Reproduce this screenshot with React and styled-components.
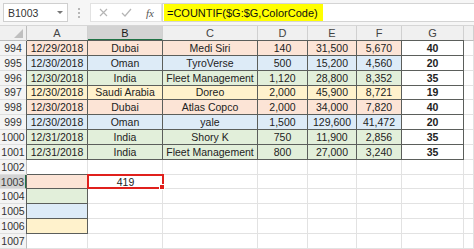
import React from 'react'
import styled, { createGlobalStyle } from 'styled-components'

const GlobalStyle = createGlobalStyle`
    html, body {
        margin: 0;
        padding: 0;
        background: #fff;
        overflow: hidden;
    }
    body {
        font-family: "Liberation Sans", Arial, sans-serif;
    }
`

const DARK = '#5b5e5b'
const LIGHT = '#e2e2e2'

const COLORS = {
    peach: '#fce4d6',
    blue: '#ddebf7',
    green: '#e2efda',
    yellow: '#fff2cc',
}

const ROWS = [
    ['994', '12/29/2018', 'Dubai', 'Medi Siri', '140', '31,500', '5,670', '40', 'peach'],
    ['995', '12/30/2018', 'Oman', 'TyroVerse', '500', '15,200', '4,560', '20', 'blue'],
    ['996', '12/30/2018', 'India', 'Fleet Management', '1,120', '28,800', '8,352', '35', 'green'],
    ['997', '12/30/2018', 'Saudi Arabia', 'Doreo', '2,000', '45,900', '8,721', '19', 'yellow'],
    ['998', '12/30/2018', 'Dubai', 'Atlas Copco', '2,000', '34,000', '7,820', '40', 'peach'],
    ['999', '12/30/2018', 'Oman', 'yale', '1,500', '129,600', '41,472', '20', 'blue'],
    ['1000', '12/31/2018', 'India', 'Shory K', '750', '11,900', '2,856', '35', 'green'],
    ['1001', '12/31/2018', 'India', 'Fleet Management', '800', '27,000', '3,240', '35', 'green'],
]

const LEGEND = [
    ['1002', null],
    ['1003', 'peach'],
    ['1004', 'green'],
    ['1005', 'blue'],
    ['1006', 'yellow'],
    ['1007', null],
]

const COLUMNS = ['A', 'B', 'C', 'D', 'E', 'F', 'G']

const Sheet = styled.div`
    width: 474px;
    height: 249px;
    overflow: hidden;
    display: flex;
    flex-direction: column;
`

const FormulaBar = styled.div`
    height: 26px;
    flex: none;
    display: flex;
    align-items: flex-start;
    padding: 3px 0 0 3px;
    box-sizing: border-box;
    background: #f6f6f6;
    border-bottom: 1px solid #d6d6d6;
`

const NameBox = styled.div`
    width: 65px;
    height: 19px;
    box-sizing: border-box;
    background: #fff;
    border: 1px solid #cfcfcf;
    display: flex;
    align-items: center;
    justify-content: space-between;
    padding: 0 4px 0 4px;
    font-size: 10.5px;
    color: #333;
`

const Caret = styled.span`
    width: 0;
    height: 0;
    border-left: 3px solid transparent;
    border-right: 3px solid transparent;
    border-top: 3px solid #777;
`

const Dots = styled.div`
    width: 22px;
    height: 19px;
    display: flex;
    flex-direction: column;
    align-items: center;
    justify-content: center;
    gap: 2px;

    span {
        width: 2px;
        height: 2px;
        background: #b8b8b8;
    }
`

const IconGroup = styled.div`
    height: 19px;
    width: 72px;
    box-sizing: border-box;
    background: #fff;
    border: 1px solid #e2e2e2;
    display: flex;
    align-items: center;
    padding-left: 8px;
    gap: 13px;
`

const Fx = styled.span`
    font-family: "Liberation Serif", serif;
    font-style: italic;
    font-size: 11px;
    color: #555;
    margin-left: 1px;
`

const FormulaInput = styled.div`
    flex: 1;
    height: 19px;
    box-sizing: border-box;
    background: #fff;
    border: 1px solid #d4d4d4;
    border-right: none;
    display: flex;
    align-items: center;
    padding-left: 1px;
`

const Highlight = styled.span`
    background: #ffff00;
    height: 17px;
    display: flex;
    align-items: center;
    padding: 0 5px 0 3px;
    font-size: 11px;
    color: #111;
`

const Grid = styled.div`
    flex: 1;
    display: grid;
    grid-template-columns: 27px 61px 75px 95px 50px 49px 45px 62px 1fr;
    grid-template-rows: 15px;
    grid-auto-rows: 14.85px;
    font-size: 10.5px;
    color: #222;
`

const ColHeader = styled.div`
    background: ${p => (p.$active ? '#d3d3d3' : '#f0f0f0')};
    border-right: 1px solid #d0d0d0;
    border-bottom: ${p => (p.$active ? '2px solid #217346' : '1px solid #bdbdbd')};
    box-sizing: border-box;
    display: flex;
    align-items: center;
    justify-content: center;
    color: ${p => (p.$active ? '#1b1b1b' : '#444')};
    font-size: 11px;
`

const Corner = styled.div`
    background: #f0f0f0;
    border-right: 1px solid #bdbdbd;
    border-bottom: 1px solid #bdbdbd;
    box-sizing: border-box;
    display: flex;
    align-items: flex-end;
    justify-content: flex-end;
    padding: 0 3px 2px 0;

    span {
        width: 0;
        height: 0;
        border-left: 9px solid transparent;
        border-bottom: 9px solid #bfbfbf;
    }
`

const RowHeader = styled.div`
    background: ${p => (p.$active ? '#d3d3d3' : '#f4f4f4')};
    border-right: ${p => (p.$active ? '2px solid #217346' : '1px solid #bdbdbd')};
    border-bottom: 1px solid #dedede;
    box-sizing: border-box;
    display: flex;
    align-items: center;
    justify-content: center;
    color: ${p => (p.$active ? '#3a3a3a' : '#333')};
    font-size: 10.5px;
`

const Cell = styled.div`
    background: ${p => p.$bg || '#fff'};
    border-right: 1px solid ${p => (p.$boxed ? DARK : LIGHT)};
    border-bottom: 1px solid ${p => (p.$boxed ? DARK : LIGHT)};
    box-shadow: ${p =>
        [p.$top && `0 -1px 0 ${DARK}`, p.$left && `-1px 0 0 ${DARK}`].filter(Boolean).join(', ') || 'none'};
    box-sizing: border-box;
    display: flex;
    align-items: center;
    justify-content: center;
    white-space: nowrap;
    overflow: hidden;
    font-weight: ${p => (p.$bold ? 700 : 400)};
`

const SelectedCell = styled.div`
    position: relative;
    z-index: 1;
    background: #fff;
    border: 2px solid #e0201c;
    margin: -1px -1px 0 -1px;
    box-sizing: border-box;
    display: flex;
    align-items: center;
    justify-content: center;
    font-size: 10.5px;
`

const Handle = styled.span`
    position: absolute;
    right: -3px;
    bottom: -3px;
    width: 4px;
    height: 4px;
    background: #e0201c;
    border: 1px solid #fff;
`

function CrossIcon() {
    return (
        <svg width="9" height="9" viewBox="0 0 9 9">
            <path d="M1 1 L8 8 M8 1 L1 8" stroke="#b5b5b5" strokeWidth="1.2" fill="none" />
        </svg>
    )
}

function CheckIcon() {
    return (
        <svg width="11" height="9" viewBox="0 0 11 9">
            <path d="M1 5 L4 8 L10 1" stroke="#b5b5b5" strokeWidth="1.2" fill="none" />
        </svg>
    )
}

export default function App() {
    return (
        <Sheet>
            <GlobalStyle />
            <FormulaBar>
                <NameBox>
                    B1003
                    <Caret />
                </NameBox>
                <Dots>
                    <span />
                    <span />
                    <span />
                </Dots>
                <IconGroup>
                    <CrossIcon />
                    <CheckIcon />
                    <Fx>fx</Fx>
                </IconGroup>
                <FormulaInput>
                    <Highlight>=COUNTIF($G:$G,ColorCode)</Highlight>
                </FormulaInput>
            </FormulaBar>
            <Grid>
                <Corner>
                    <span />
                </Corner>
                {COLUMNS.map(c => (
                    <ColHeader key={c} $active={c === 'B'}>
                        {c}
                    </ColHeader>
                ))}
                <ColHeader />

                {ROWS.map((row, r) => {
                    let [num, ...rest] = row
                    let color = COLORS[rest[7]]
                    return (
                        <React.Fragment key={num}>
                            <RowHeader>{num}</RowHeader>
                            {rest.slice(0, 7).map((value, i) => (
                                <Cell
                                    key={i}
                                    $boxed
                                    $top={r === 0}
                                    $left={i === 0}
                                    $bg={i === 6 ? '#fff' : color}
                                    $bold={i === 6}
                                >
                                    {value}
                                </Cell>
                            ))}
                            <Cell />
                        </React.Fragment>
                    )
                })}

                {LEGEND.map(([num, color]) => (
                    <React.Fragment key={num}>
                        <RowHeader $active={num === '1003'}>{num}</RowHeader>
                        <Cell $boxed={!!color} $top={num === '1003'} $left={!!color} $bg={COLORS[color]} />
                        {num === '1003' ? (
                            <SelectedCell>
                                419
                                <Handle />
                            </SelectedCell>
                        ) : (
                            <Cell />
                        )}
                        {[0, 1, 2, 3, 4, 5].map(i => (
                            <Cell key={i} />
                        ))}
                    </React.Fragment>
                ))}
            </Grid>
        </Sheet>
    )
}
